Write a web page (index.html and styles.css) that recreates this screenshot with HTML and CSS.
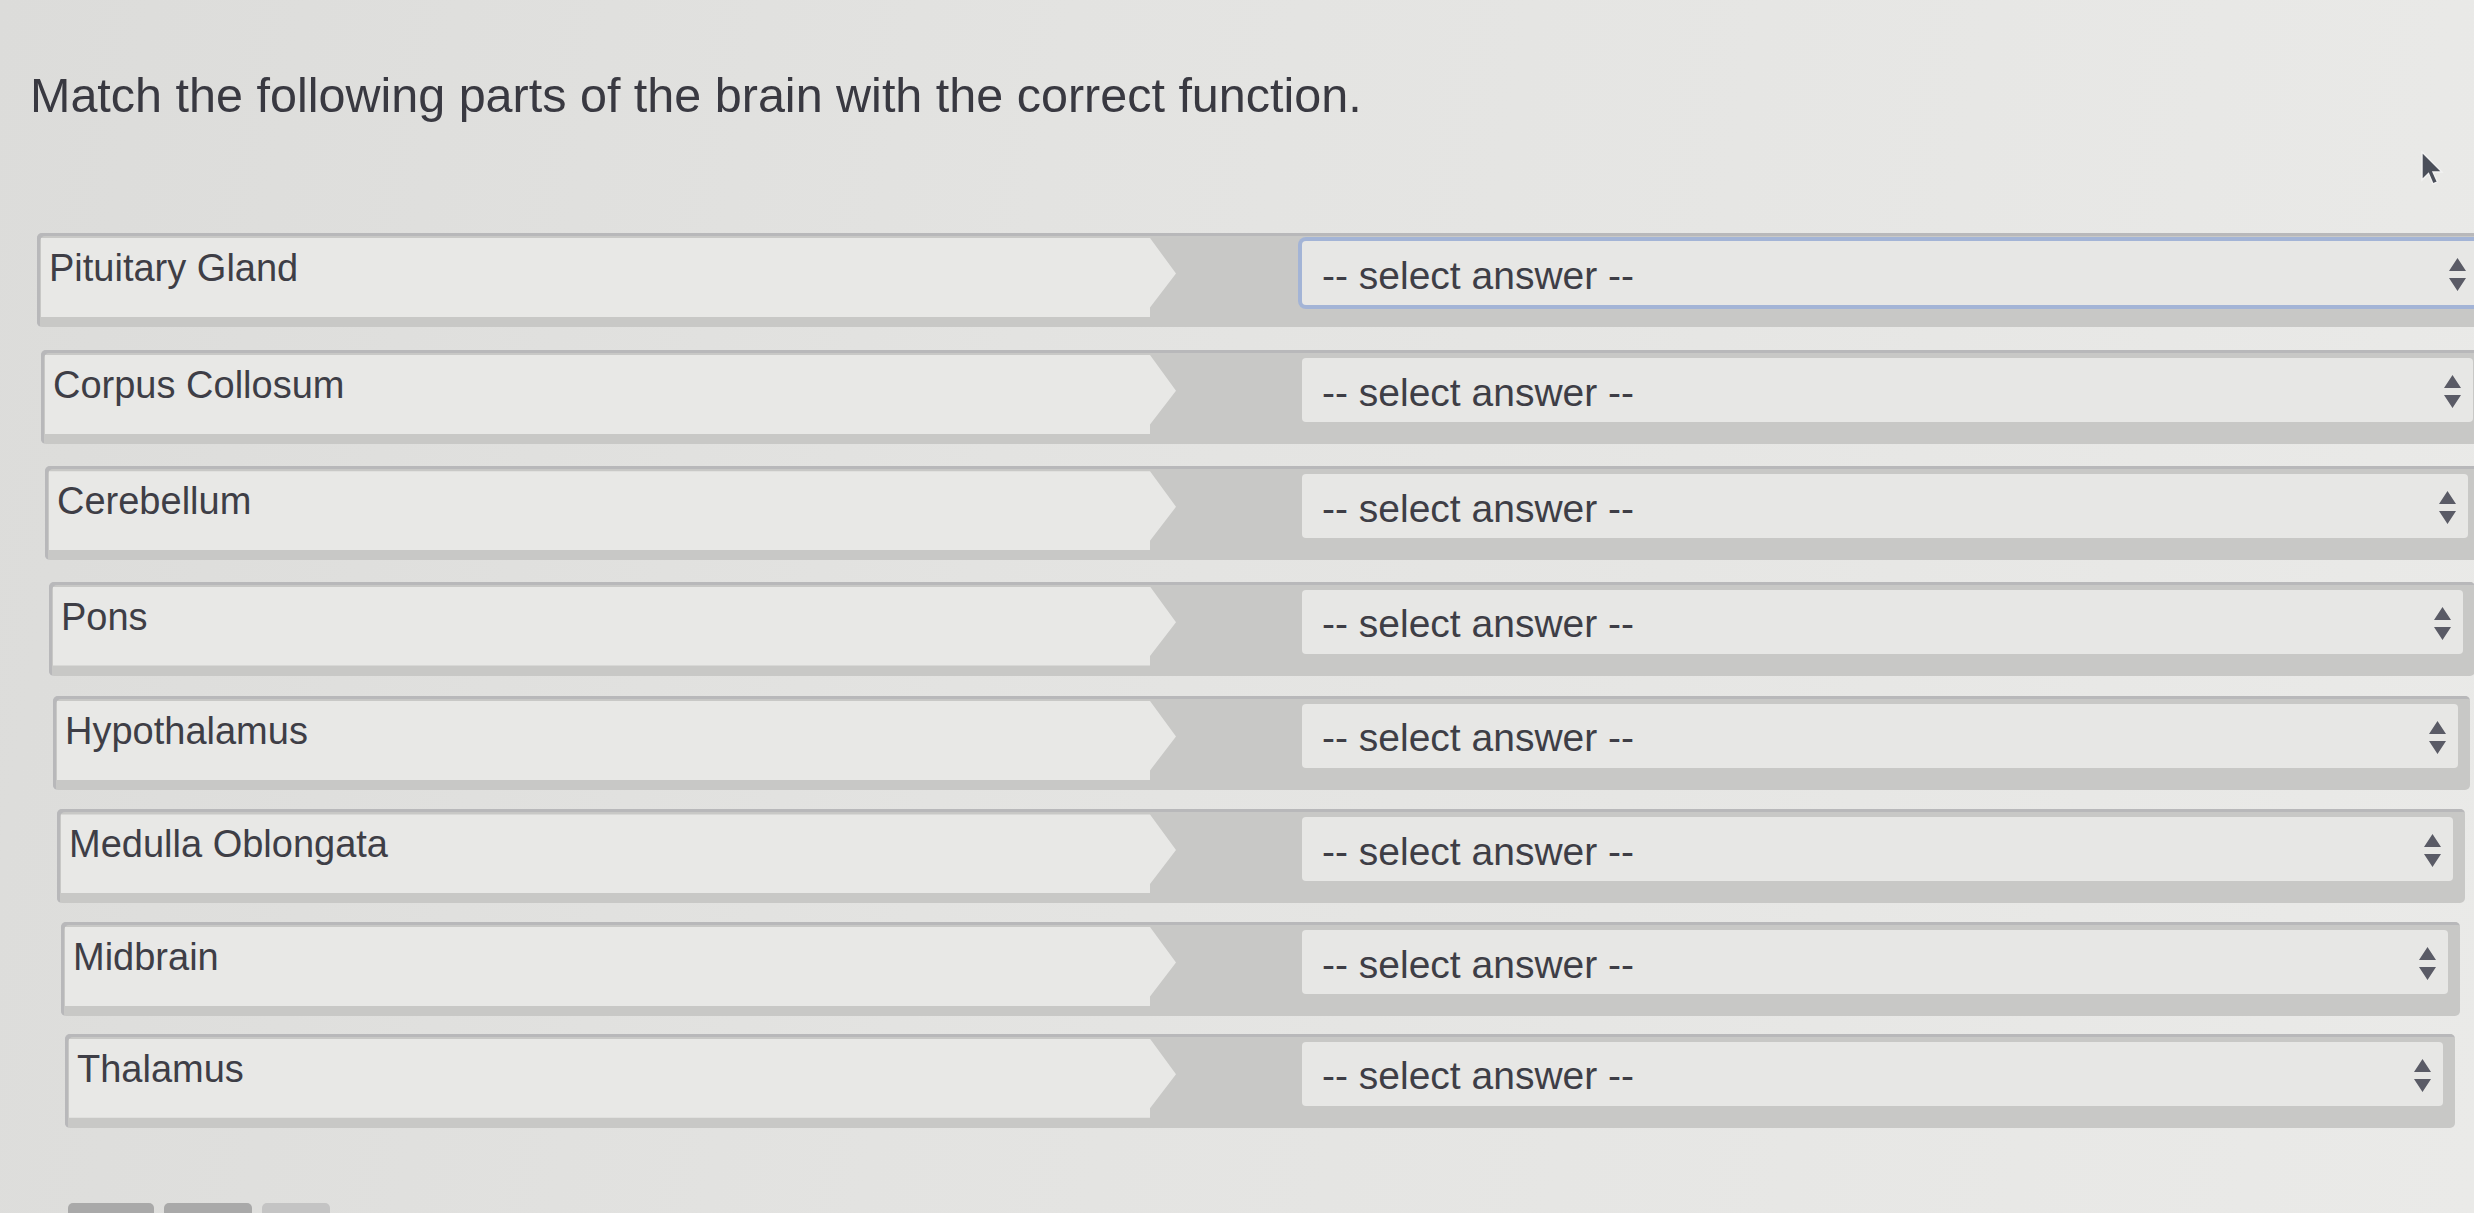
FILE: index.html
```html
<!DOCTYPE html>
<html lang="en">
<head>
<meta charset="utf-8">
<title>Match the following parts of the brain</title>
<link rel="stylesheet" href="styles.css">
</head>
<body>
<main class="page">
  <h1 class="prompt">Match the following parts of the brain with the correct function.</h1>
  <ul class="pairs">
    <li class="pair">
      <div class="term">Pituitary Gland</div>
      <div class="choice focused">
        <select class="answer"><option>-- select answer --</option></select>
        <svg class="updown" viewBox="0 0 17 33"><path d="M0 13 L8.5 0 L17 13 Z M0 20 L17 20 L8.5 33 Z"/></svg>
      </div>
    </li>
    <li class="pair">
      <div class="term">Corpus Collosum</div>
      <div class="choice">
        <select class="answer"><option>-- select answer --</option></select>
        <svg class="updown" viewBox="0 0 17 33"><path d="M0 13 L8.5 0 L17 13 Z M0 20 L17 20 L8.5 33 Z"/></svg>
      </div>
    </li>
    <li class="pair">
      <div class="term">Cerebellum</div>
      <div class="choice">
        <select class="answer"><option>-- select answer --</option></select>
        <svg class="updown" viewBox="0 0 17 33"><path d="M0 13 L8.5 0 L17 13 Z M0 20 L17 20 L8.5 33 Z"/></svg>
      </div>
    </li>
    <li class="pair">
      <div class="term">Pons</div>
      <div class="choice">
        <select class="answer"><option>-- select answer --</option></select>
        <svg class="updown" viewBox="0 0 17 33"><path d="M0 13 L8.5 0 L17 13 Z M0 20 L17 20 L8.5 33 Z"/></svg>
      </div>
    </li>
    <li class="pair">
      <div class="term">Hypothalamus</div>
      <div class="choice">
        <select class="answer"><option>-- select answer --</option></select>
        <svg class="updown" viewBox="0 0 17 33"><path d="M0 13 L8.5 0 L17 13 Z M0 20 L17 20 L8.5 33 Z"/></svg>
      </div>
    </li>
    <li class="pair">
      <div class="term">Medulla Oblongata</div>
      <div class="choice">
        <select class="answer"><option>-- select answer --</option></select>
        <svg class="updown" viewBox="0 0 17 33"><path d="M0 13 L8.5 0 L17 13 Z M0 20 L17 20 L8.5 33 Z"/></svg>
      </div>
    </li>
    <li class="pair">
      <div class="term">Midbrain</div>
      <div class="choice">
        <select class="answer"><option>-- select answer --</option></select>
        <svg class="updown" viewBox="0 0 17 33"><path d="M0 13 L8.5 0 L17 13 Z M0 20 L17 20 L8.5 33 Z"/></svg>
      </div>
    </li>
    <li class="pair">
      <div class="term">Thalamus</div>
      <div class="choice">
        <select class="answer"><option>-- select answer --</option></select>
        <svg class="updown" viewBox="0 0 17 33"><path d="M0 13 L8.5 0 L17 13 Z M0 20 L17 20 L8.5 33 Z"/></svg>
      </div>
    </li>
  </ul>
  <div class="buttons">
    <span class="btn btn-a"></span>
    <span class="btn btn-b"></span>
    <span class="btn btn-c"></span>
  </div>
</main>
<svg class="cursor" viewBox="0 0 24 36"><path d="M2 2 L2 30 L8.5 23.5 L13 34 L17.5 32 L13 22 L22 22 Z"/></svg>
</body>
</html>
```
FILE: styles.css
```css
html, body {
  margin: 0;
  padding: 0;
}

body {
  width: 2474px;
  height: 1213px;
  overflow: hidden;
  position: relative;
  background: linear-gradient(100deg, #dcdcda 0%, #e3e3e1 40%, #eaeae8 100%);
  font-family: "Liberation Sans", Arial, sans-serif;
  color: #3e3e46;
}

.page {
  width: 100%;
}

.prompt {
  margin: 0;
  padding: 68px 0 0 30px;
  font-size: 48.5px;
  font-weight: normal;
  line-height: 54px;
  color: #393941;
}

.pairs {
  list-style: none;
  margin: 111px 0 0;
  padding: 0;
}

.pair {
  --i: 0;
  display: flex;
  align-items: flex-start;
  height: 94px;
  margin-left: calc(37px + var(--i) * 4px);
  margin-right: calc(var(--i) * 5px - 16px);
  margin-top: calc(24px - var(--i) * 0.9px);
  background: #c8c8c6;
  border-radius: 5px;
  box-shadow: inset 3px 3px 0 #b8b8ba;
}

.pair:first-child { margin-top: 0; }
.pair:nth-child(2) { --i: 1; }
.pair:nth-child(3) { --i: 2; }
.pair:nth-child(4) { --i: 3; }
.pair:nth-child(5) { --i: 4; }
.pair:nth-child(6) { --i: 5; }
.pair:nth-child(7) { --i: 6; }
.pair:nth-child(8) { --i: 7; }

.term {
  flex: 0 0 calc(1135px - var(--i) * 4px);
  box-sizing: border-box;
  height: 79px;
  margin: 5px 0 0 4px;
  padding: 8px 40px 0 8px;
  background: #e8e8e6;
  font-size: 38px;
  line-height: 44px;
  white-space: nowrap;
  clip-path: polygon(0 0, calc(100% - 26px) 0, 100% 45%, calc(100% - 26px) 88%, calc(100% - 26px) 100%, 0 100%);
}

.choice {
  position: relative;
  flex: 0 0 calc(1176px - var(--i) * 5px);
  height: 64px;
  margin: 8px 0 0 126px;
}

.answer {
  -webkit-appearance: none;
  appearance: none;
  display: block;
  width: 100%;
  height: 100%;
  box-sizing: border-box;
  margin: 0;
  padding: 4px 50px 0 20px;
  border: none;
  border-radius: 4px;
  outline: none;
  background: #e7e7e5;
  font-family: "Liberation Sans", Arial, sans-serif;
  font-size: 39px;
  color: #3e3e46;
}

.focused .answer {
  box-shadow: 0 0 0 4px #a3b4d6;
}

.updown {
  position: absolute;
  right: 12px;
  top: 50%;
  width: 17px;
  height: 33px;
  margin-top: -15px;
  fill: #5a5b66;
  pointer-events: none;
}

.buttons {
  display: flex;
  gap: 10px;
  margin: 75px 0 0 68px;
}

.btn {
  display: block;
  height: 30px;
  border-radius: 5px;
  background: #a9a9a9;
}

.btn-a { width: 86px; }
.btn-b { width: 88px; }
.btn-c { width: 68px; background: #c4c4c4; }

.cursor {
  position: absolute;
  left: 2420px;
  top: 150px;
  width: 24px;
  height: 36px;
  fill: #4b4f5a;
  stroke: #f2f2f2;
  stroke-width: 1.4;
}
```
